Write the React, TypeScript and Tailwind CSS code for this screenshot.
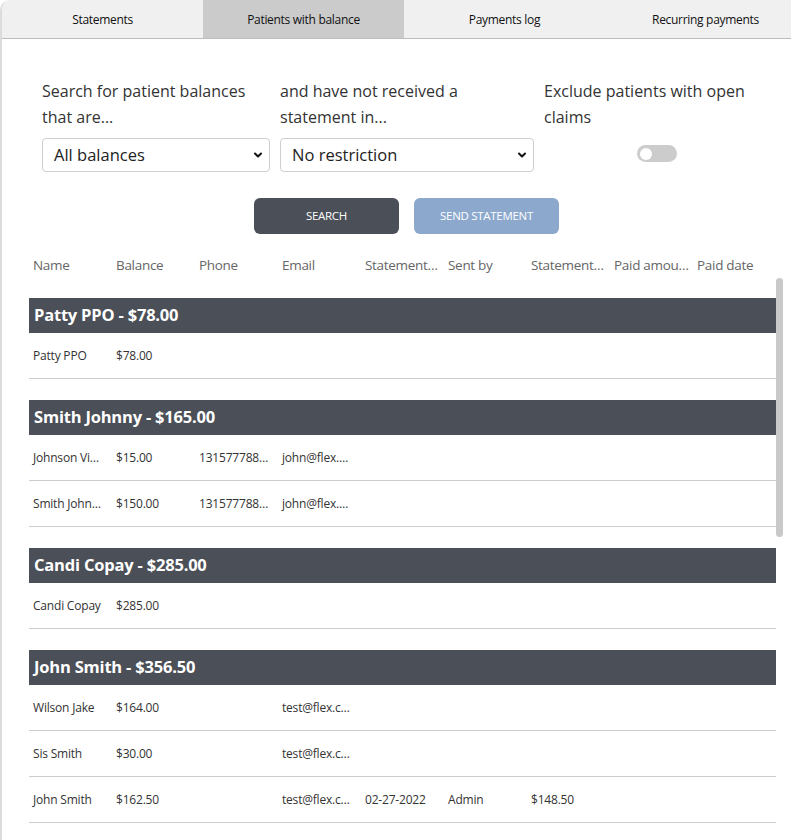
import { ChevronDown } from "lucide-react";

const tabs = ["Statements", "Patients with balance", "Payments log", "Recurring payments"];

const columns = [
  "Name",
  "Balance",
  "Phone",
  "Email",
  "Statement date",
  "Sent by",
  "Statement amount",
  "Paid amount",
  "Paid date",
];

type Row = string[];

const groups: { title: string; rows: Row[] }[] = [
  { title: "Patty PPO - $78.00", rows: [["Patty PPO", "$78.00", "", "", "", "", "", "", ""]] },
  {
    title: "Smith Johnny - $165.00",
    rows: [
      ["Johnson Victor", "$15.00", "13157778888", "john@flex.com", "", "", "", "", ""],
      ["Smith Johnny", "$150.00", "13157778888", "john@flex.com", "", "", "", "", ""],
    ],
  },
  { title: "Candi Copay - $285.00", rows: [["Candi Copay", "$285.00", "", "", "", "", "", "", ""]] },
  {
    title: "John Smith - $356.50",
    rows: [
      ["Wilson Jake", "$164.00", "", "test@flex.com", "", "", "", "", ""],
      ["Sis Smith", "$30.00", "", "test@flex.com", "", "", "", "", ""],
      ["John Smith", "$162.50", "", "test@flex.com", "02-27-2022", "Admin", "$148.50", "", ""],
    ],
  },
];

function Select({ value, width }: { value: string; width: string }) {
  return (
    <div className={`relative ${width}`}>
      <div className="h-[34px] rounded-[4px] border border-[#cfcfcf] bg-white pl-[11px] flex items-center text-[16.5px] text-[#222]">
        {value}
      </div>
      <ChevronDown className="absolute right-[6px] top-[11px] h-[12px] w-[12px] text-[#111]" strokeWidth={4} />
    </div>
  );
}

export default function App() {
  return (
    <div
      className="w-[791px] h-[840px] overflow-hidden bg-white"
      style={{ fontFamily: '"Open Sans", "Noto Sans", sans-serif' }}
    >
      <div className="h-full border-l-2 border-[#dcdcdc] rounded-tl-[10px] flex flex-col">
        {/* Tabs */}
        <div className="flex h-[39px] shrink-0 bg-[#f0f0f0] border-b border-[#bdbdbd] overflow-hidden rounded-tl-[10px]">
          {tabs.map((t, i) => (
            <div
              key={t}
              className={`w-[201px] shrink-0 flex items-center justify-center pt-[1px] text-[12px] tracking-[-0.3px] text-[#111] ${
                i === 1 ? "bg-[#cbcbcb]" : ""
              }`}
            >
              {t}
            </div>
          ))}
        </div>

        {/* Filters */}
        <div className="flex pl-[40px] pt-[39px] gap-[10px]">
          <div className="w-[228px] flex flex-col">
            <div className="text-[16px] leading-[26px] text-[#333] h-[60px]">Search for patient balances that are...</div>
            <Select value="All balances" width="w-[228px]" />
          </div>
          <div className="w-[254px] flex flex-col">
            <div className="text-[16px] leading-[26px] text-[#333] h-[60px] pr-[20px]">and have not received a statement in...</div>
            <Select value="No restriction" width="w-[254px]" />
          </div>
          <div className="w-[226px] flex flex-col">
            <div className="text-[16px] leading-[26px] text-[#333] h-[60px] pr-[10px]">Exclude patients with open claims</div>
            <div className="flex justify-center pt-[7px]">
              <div className="w-[40px] h-[17px] rounded-full bg-[#cccccc] flex items-center pl-[3px]">
                <div className="w-[12px] h-[12px] rounded-full bg-white" />
              </div>
            </div>
          </div>
        </div>

        {/* Buttons */}
        <div className="flex justify-center gap-[15px] mt-[26px] pl-[20px]">
          <button className="w-[145px] h-[36px] rounded-[6px] bg-[#4b4f57] text-white text-[11.5px] tracking-[-0.3px]">
            SEARCH
          </button>
          <button className="w-[145px] h-[36px] rounded-[6px] bg-[#8ca8cd] text-white text-[11.5px] tracking-[-0.3px]">
            SEND STATEMENT
          </button>
        </div>

        {/* Table */}
        <div className="relative ml-[27px] w-[747px] mt-[20px] flex-1 flex flex-col min-h-0">
          <div className="grid grid-cols-9 h-[22px] items-center">
            {columns.map((c) => (
              <div key={c} className="pl-[4px] pr-[3px] truncate text-[13.5px] tracking-[-0.3px] text-[#666]">
                {c}
              </div>
            ))}
          </div>
          <div className="flex-1 min-h-0 overflow-hidden pt-[1px]">
            {groups.map((g) => (
              <div key={g.title}>
                <div className="mt-[21px] h-[35px] bg-[#4b4f57] flex items-center pl-[5px] text-white font-bold text-[16.5px] tracking-[-0.2px]">
                  {g.title}
                </div>
                {g.rows.map((r, ri) => (
                  <div key={ri} className="grid grid-cols-9 h-[46px] items-center border-b border-[#cccccc]">
                    {r.map((cell, ci) => (
                      <div key={ci} className="pl-[4px] pr-[8px] truncate text-[12px] tracking-[-0.2px] text-[#333]">
                        {cell}
                      </div>
                    ))}
                  </div>
                ))}
              </div>
            ))}
          </div>
          {/* scrollbar */}
          <div className="absolute left-[747px] top-[24px] w-[7px] h-[259px] rounded-full bg-[#c9c9c9]" />
        </div>
      </div>
    </div>
  );
}
